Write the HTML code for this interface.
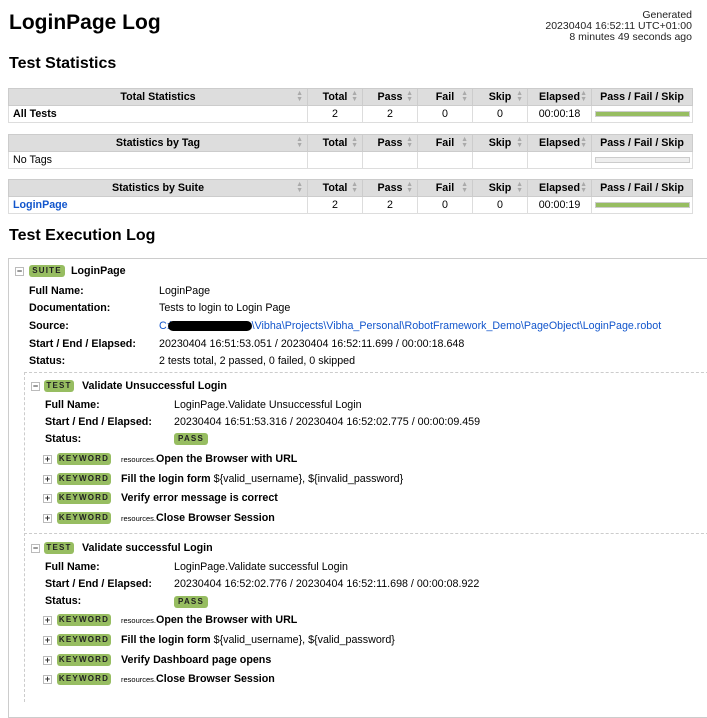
<!DOCTYPE html>
<html><head><meta charset="utf-8"><style>
*{margin:0;padding:0;box-sizing:border-box}
body{width:707px;height:688px;overflow:hidden;background:#fff;font-family:"Liberation Sans",Arial,sans-serif;color:#000;position:relative;font-size:10.7px}
.a{position:absolute;white-space:nowrap;line-height:14px}
h1{position:absolute;left:9px;top:10px;font-size:21px;font-weight:bold;line-height:26px}
h2{position:absolute;left:9px;font-size:16px;font-weight:bold;line-height:20px}
table{position:absolute;left:8px;width:685px;border-collapse:collapse;table-layout:fixed;font-size:10.7px}
th{background:#ddd;border:1px solid #ccc;height:17px;font-weight:bold;position:relative;padding:0}
td{border:1px solid #ddd;border-top:0;height:17px;text-align:center;padding:0;line-height:15px}
th .s{position:absolute;right:4px;top:2px;color:#aaa;font-size:7px;line-height:6px}
td.l{text-align:left;padding-left:4px}
.bar{height:6px;width:95px;margin:0 auto;background:#97bd61;border:1px solid #ccc}
.bar.e{background:#eee}
.lnk{color:#15c;}
.b{font-weight:bold}
.badge{position:absolute;background:#97bd61;border-radius:3px;color:#222;font-weight:bold;font-size:8px;letter-spacing:1.2px;text-align:center;line-height:12px;height:12px}
.tg{position:absolute;width:9px;height:9px;border:1px solid #bbb;background:#fff;font-size:9px;line-height:7px;text-align:center;font-weight:bold;color:#333}
.sm{font-size:7.5px;font-weight:normal}
</style></head><body>
<h1>LoginPage Log</h1>
<div class="a" style="right:15px;top:10px;text-align:right;line-height:11px;font-size:10.5px;color:#222">Generated<br>20230404 16:52:11 UTC+01:00<br>8 minutes 49 seconds ago</div>
<h2 style="top:54px">Test Statistics</h2>
<table style="top:88px"><colgroup><col style="width:299px"><col style="width:55px"><col style="width:55px"><col style="width:55px"><col style="width:55px"><col style="width:64px"><col></colgroup>
<tr><th>Total Statistics<span class="s">▲<br>▼</span></th><th>Total<span class="s">▲<br>▼</span></th><th>Pass<span class="s">▲<br>▼</span></th><th>Fail<span class="s">▲<br>▼</span></th><th>Skip<span class="s">▲<br>▼</span></th><th>Elapsed<span class="s">▲<br>▼</span></th><th>Pass / Fail / Skip</th></tr>
<tr><td class="l b">All Tests</td><td>2</td><td>2</td><td>0</td><td>0</td><td>00:00:18</td><td><div class="bar"></div></td></tr></table>
<table style="top:134px"><colgroup><col style="width:299px"><col style="width:55px"><col style="width:55px"><col style="width:55px"><col style="width:55px"><col style="width:64px"><col></colgroup>
<tr><th>Statistics by Tag<span class="s">▲<br>▼</span></th><th>Total<span class="s">▲<br>▼</span></th><th>Pass<span class="s">▲<br>▼</span></th><th>Fail<span class="s">▲<br>▼</span></th><th>Skip<span class="s">▲<br>▼</span></th><th>Elapsed<span class="s">▲<br>▼</span></th><th>Pass / Fail / Skip</th></tr>
<tr><td class="l">No Tags</td><td></td><td></td><td></td><td></td><td></td><td><div class="bar e"></div></td></tr></table>
<table style="top:179px"><colgroup><col style="width:299px"><col style="width:55px"><col style="width:55px"><col style="width:55px"><col style="width:55px"><col style="width:64px"><col></colgroup>
<tr><th>Statistics by Suite<span class="s">▲<br>▼</span></th><th>Total<span class="s">▲<br>▼</span></th><th>Pass<span class="s">▲<br>▼</span></th><th>Fail<span class="s">▲<br>▼</span></th><th>Skip<span class="s">▲<br>▼</span></th><th>Elapsed<span class="s">▲<br>▼</span></th><th>Pass / Fail / Skip</th></tr>
<tr><td class="l b lnk">LoginPage</td><td>2</td><td>2</td><td>0</td><td>0</td><td>00:00:19</td><td><div class="bar"></div></td></tr></table>
<h2 style="top:226px">Test Execution Log</h2>
<div style="position:absolute;left:8px;top:258px;width:710px;height:460px;border:1px solid #ccc"></div>
<div class="tg" style="left:15px;top:267px">−</div><div class="badge" style="left:29px;top:265px;width:36px">SUITE</div>
<div class="a b" style="left:71px;top:264px">LoginPage</div>
<div class="a b" style="left:29px;top:284px">Full Name:</div><div class="a" style="left:159px;top:284px">LoginPage</div>
<div class="a b" style="left:29px;top:301px">Documentation:</div><div class="a" style="left:159px;top:301px">Tests to login to Login Page</div>
<div class="a b" style="left:29px;top:319px">Source:</div><div class="a lnk" style="left:159px;top:319px">C:\Users\xxxxxxxxx\Vibha\Projects\Vibha_Personal\RobotFramework_Demo\PageObject\LoginPage.robot</div>
<div style="position:absolute;left:168px;top:321px;width:84px;height:10px;border-radius:5px;background:#000"></div>
<div class="a b" style="left:29px;top:337px">Start / End / Elapsed:</div><div class="a" style="left:159px;top:337px">20230404 16:51:53.051 / 20230404 16:52:11.699 / 00:00:18.648</div>
<div class="a b" style="left:29px;top:354px">Status:</div><div class="a" style="left:159px;top:354px">2 tests total, 2 passed, 0 failed, 0 skipped</div>

<div style="position:absolute;left:24px;top:372px;width:700px;height:330px;border-left:1px dashed #ccc;border-top:1px dashed #ccc"></div>
<div style="position:absolute;left:24px;top:533px;width:700px;border-top:1px dashed #ccc"></div>

<div class="tg" style="left:31px;top:382px">−</div><div class="badge" style="left:44px;top:380px;width:30px">TEST</div>
<div class="a b" style="left:82px;top:379px">Validate Unsuccessful Login</div>
<div class="a b" style="left:45px;top:398px">Full Name:</div><div class="a" style="left:174px;top:398px">LoginPage.Validate Unsuccessful Login</div>
<div class="a b" style="left:45px;top:415px">Start / End / Elapsed:</div><div class="a" style="left:174px;top:415px">20230404 16:51:53.316 / 20230404 16:52:02.775 / 00:00:09.459</div>
<div class="a b" style="left:45px;top:432px">Status:</div><div class="badge" style="left:174px;top:433px;width:34px">PASS</div>
<div class="tg" style="left:43px;top:455px">+</div><div class="badge" style="left:57px;top:453px;width:54px">KEYWORD</div><div class="a b" style="left:121px;top:452px"><span class="sm">resources.</span>Open the Browser with URL</div>
<div class="tg" style="left:43px;top:475px">+</div><div class="badge" style="left:57px;top:473px;width:54px">KEYWORD</div><div class="a" style="left:121px;top:472px"><b>Fill the login form</b> ${valid_username}, ${invalid_password}</div>
<div class="tg" style="left:43px;top:494px">+</div><div class="badge" style="left:57px;top:492px;width:54px">KEYWORD</div><div class="a b" style="left:121px;top:491px">Verify error message is correct</div>
<div class="tg" style="left:43px;top:514px">+</div><div class="badge" style="left:57px;top:512px;width:54px">KEYWORD</div><div class="a b" style="left:121px;top:511px"><span class="sm">resources.</span>Close Browser Session</div>

<div class="tg" style="left:31px;top:544px">−</div><div class="badge" style="left:44px;top:542px;width:30px">TEST</div>
<div class="a b" style="left:82px;top:541px">Validate successful Login</div>
<div class="a b" style="left:45px;top:560px">Full Name:</div><div class="a" style="left:174px;top:560px">LoginPage.Validate successful Login</div>
<div class="a b" style="left:45px;top:577px">Start / End / Elapsed:</div><div class="a" style="left:174px;top:577px">20230404 16:52:02.776 / 20230404 16:52:11.698 / 00:00:08.922</div>
<div class="a b" style="left:45px;top:594px">Status:</div><div class="badge" style="left:174px;top:596px;width:34px">PASS</div>
<div class="tg" style="left:43px;top:616px">+</div><div class="badge" style="left:57px;top:614px;width:54px">KEYWORD</div><div class="a b" style="left:121px;top:613px"><span class="sm">resources.</span>Open the Browser with URL</div>
<div class="tg" style="left:43px;top:636px">+</div><div class="badge" style="left:57px;top:634px;width:54px">KEYWORD</div><div class="a" style="left:121px;top:633px"><b>Fill the login form</b> ${valid_username}, ${valid_password}</div>
<div class="tg" style="left:43px;top:656px">+</div><div class="badge" style="left:57px;top:654px;width:54px">KEYWORD</div><div class="a b" style="left:121px;top:653px">Verify Dashboard page opens</div>
<div class="tg" style="left:43px;top:675px">+</div><div class="badge" style="left:57px;top:673px;width:54px">KEYWORD</div><div class="a b" style="left:121px;top:672px"><span class="sm">resources.</span>Close Browser Session</div>
</body></html>
